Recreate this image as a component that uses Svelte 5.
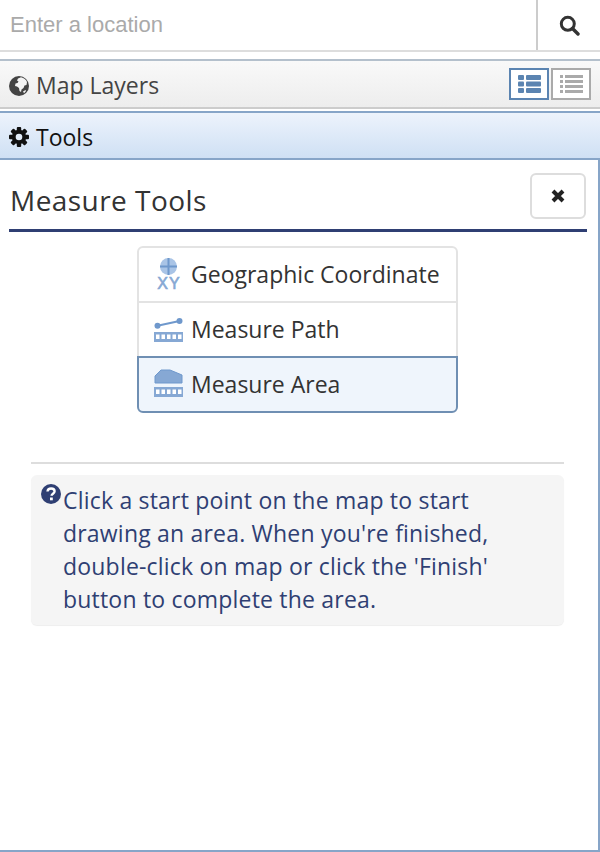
<script>
    const tools = [
        { label: "Geographic Coordinate", icon: "xy" },
        { label: "Measure Path", icon: "path" },
        { label: "Measure Area", icon: "area", active: true }
    ];
    const notches = [2, 7.5, 13, 18.5, 24];
</script>

<div class="page">
    <div class="search">
        <div class="search-input">Enter a location</div>
        <div class="search-btn">
            <svg width="21" height="21" viewBox="0 0 21 21" fill="none" stroke="#333">
                <circle cx="8.8" cy="8.8" r="6.5" stroke-width="3" />
                <path d="M13.500 13.500l5.500 5.500" stroke-width="3.400" stroke-linecap="round" />
            </svg>
        </div>
    </div>

    <div class="bar layers">
        <svg class="bar-icon globe" width="20" height="20" viewBox="0 0 20 20">
            <circle cx="10" cy="10" r="10" fill="#444" />
            <path d="M9 2.500l3-1.300c3 .6 5 2.300 6 4.800l-.5 3-2 .5-1 2.500-2 1.500-.5 2.500-1.500-1-.5-3-2-1.500-2-.5.5-2.500 2-.5 1-1.500-1.500-1z" fill="#f4f4f4" />
            <path d="M5 3.500l1 1.500-2 2.500.5 3 2.500 2.500-.3 2.500-2 2c-2.500-2-3.500-4.500-3.500-7 0-3 1.500-5.500 3.800-7z" fill="#444" />
            <path d="M14 15.500l2.500-1.500.5 1-2 2.200z" fill="#f4f4f4" />
        </svg>
        <span>Map Layers</span>
        <div class="toggles">
            <div class="toggle on">
                <svg width="23" height="18" viewBox="0 0 23 18" fill="#5b84b1">
                    <rect width="6" height="5" y="0" rx="1" /><rect x="8" width="15" height="5" y="0" rx="1" />
                    <rect width="6" height="5" y="6.500" rx="1" /><rect x="8" width="15" height="5" y="6.500" rx="1" />
                    <rect width="6" height="5" y="13" rx="1" /><rect x="8" width="15" height="5" y="13" rx="1" />
                </svg>
            </div>
            <div class="toggle">
                <svg width="23" height="18" viewBox="0 0 23 18" fill="#aaa">
                    <rect width="3" height="3" y="0" /><rect x="5" width="18" height="3" y="0" />
                    <rect width="3" height="3" y="5" /><rect x="5" width="18" height="3" y="5" />
                    <rect width="3" height="3" y="10" /><rect x="5" width="18" height="3" y="10" />
                    <rect width="3" height="3" y="15" /><rect x="5" width="18" height="3" y="15" />
                </svg>
            </div>
        </div>
    </div>

    <div class="bar tools-bar">
        <svg class="bar-icon gear" width="20" height="20" viewBox="0 0 20 20">
            <g fill="#111">
                <circle cx="10" cy="10" r="7.200" />
                <rect x="7.800" y="0" width="4.400" height="20" rx="1" />
                <rect x="7.800" y="0" width="4.400" height="20" rx="1" transform="rotate(45 10 10)" />
                <rect x="7.800" y="0" width="4.400" height="20" rx="1" transform="rotate(90 10 10)" />
                <rect x="7.800" y="0" width="4.400" height="20" rx="1" transform="rotate(135 10 10)" />
            </g>
            <circle cx="10" cy="10" r="3.300" fill="#e3edf9" />
        </svg>
        <span>Tools</span>
    </div>

    <div class="panel">
        <div class="panel-head">
            <h2>Measure Tools</h2>
            <button class="close" aria-label="Close">
                <svg width="14" height="14" viewBox="0 0 14 14" stroke="#222" stroke-width="4">
                    <path d="M2 2l10 10M12 2L2 12" />
                </svg>
            </button>
        </div>

        <div class="list">
            {#each tools as tool}
                <div class="item" class:active={tool.active}>
                    <svg class="tool-icon" width="30" height="30" viewBox="0 0 30 30">
                        {#if tool.icon === "xy"}
                            <circle cx="14.500" cy="7.500" r="8.500" fill="#a9c4e6" />
                            <path d="M14.500 -1v17M6 7.500h17" stroke="#6f98cc" stroke-width="2" />
                            <text x="15" y="29.500" text-anchor="middle" class="xy">XY</text>
                        {:else}
                            {#if tool.icon === "path"}
                                <path d="M3.500 11.700L25.500 7" stroke="#6f98cc" stroke-width="2" />
                                <circle cx="3.500" cy="11.700" r="3" fill="#6f98cc" />
                                <circle cx="25.500" cy="7" r="3" fill="#6f98cc" />
                            {:else}
                                <path d="M1 7l6-6h9l12 5v8H1z" fill="#86a8d4" stroke="#6f98cc" />
                            {/if}
                            <rect x="0" y="18" width="29" height="10" fill="#86a8d4" />
                            {#each notches as x}
                                <rect x={x} y="20.500" width="3.500" height="4.500" fill="#fff" />
                            {/each}
                        {/if}
                    </svg>
                    <span>{tool.label}</span>
                </div>
            {/each}
        </div>

        <hr />

        <div class="help">
            <svg class="help-icon" width="20" height="20" viewBox="0 0 20 20">
                <circle cx="10" cy="10" r="10" fill="#2f3f73" />
                <path d="M6.500 7.500c.2-2 1.700-3 3.600-3 2 0 3.500 1.100 3.500 2.800 0 2.500-3 2.500-3 4.500" fill="none" stroke="#fff" stroke-width="2.400" />
                <rect x="9" y="13.500" width="2.800" height="2.800" fill="#fff" />
            </svg>
            <p>Click a start point on the map to start drawing an area. When you're finished, double-click on map or click the 'Finish' button to complete the area.</p>
        </div>
    </div>
</div>

<style>
    :global(body) {
        margin: 0;
        background: #fff;
    }

    .page {
        width: 600px;
        height: 852px;
        display: flex;
        flex-direction: column;
        font-family: "Open Sans", "Noto Sans", sans-serif;
        overflow: hidden;
    }

    .search {
        height: 50px;
        flex: none;
        display: flex;
        border-bottom: 2px solid #ddd;
        margin-bottom: 7px;
    }

    .search-input {
        flex: 1;
        padding-left: 10px;
        line-height: 50px;
        font-family: "Liberation Sans", sans-serif;
        font-size: 22px;
        color: #aaa;
    }

    .search-btn {
        width: 64px;
        display: flex;
        align-items: center;
        justify-content: center;
        border-left: 2px solid #ccc;
        box-sizing: border-box;
    }

    .bar {
        flex: none;
        box-sizing: border-box;
        display: flex;
        align-items: center;
        padding: 2px 0 0 9px;
        font-size: 23px;
    }

    .bar-icon {
        margin-right: 7px;
        flex: none;
    }

    .globe,
    .gear {
        margin-top: 1px;
    }

    .layers {
        height: 50px;
        color: #444;
        background: linear-gradient(#f9f9f9, #ededed);
        border-top: 2px solid #b4c0cc;
        border-bottom: 2px solid #ccc;
        margin-bottom: 2px;
    }

    .toggles {
        margin: 0 9px 3px auto;
        display: flex;
        gap: 2px;
    }

    .toggle {
        width: 40px;
        height: 32px;
        box-sizing: border-box;
        border: 2px solid #aaa;
        background: #fff;
        display: flex;
        align-items: center;
        justify-content: center;
    }

    .toggle.on {
        border-color: #5b84b1;
    }

    .tools-bar {
        height: 49px;
        color: #111;
        background: linear-gradient(#edf3fc, #cfe0f4);
        border-top: 2px solid #87a5c8;
        border-bottom: 2px solid #87a5c8;
    }

    .panel {
        flex: 1;
        box-sizing: border-box;
        border-right: 2px solid #87a5c8;
        border-bottom: 2px solid #87a5c8;
        padding: 0 11px 0 9px;
    }

    .panel-head {
        height: 69px;
        display: flex;
        align-items: center;
        justify-content: space-between;
        border-bottom: 3px solid #2f3f73;
    }

    h2 {
        margin: 10px 0 0 1px;
        font-size: 28px;
        font-weight: 400;
        letter-spacing: 0.450px;
        color: #333;
    }

    .close {
        width: 56px;
        height: 46px;
        margin: 3px 1px 0 0;
        box-sizing: border-box;
        border: 2px solid #ddd;
        border-radius: 6px;
        background: #fff;
        display: flex;
        align-items: center;
        justify-content: center;
        padding: 0;
    }

    .list {
        width: 321px;
        margin: 14px 0 0 128px;
    }

    .item {
        height: 57px;
        box-sizing: border-box;
        display: flex;
        align-items: center;
        gap: 7px;
        padding: 0 0 1px 15px;
        border: 2px solid #e3e3e3;
        margin-top: -2px;
        font-size: 23px;
        color: #333;
        background: #fff;
    }

    .item:first-child {
        margin-top: 0;
        border-radius: 6px 6px 0 0;
    }

    .item.active {
        border-color: #6f8fb3;
        background: #eff5fc;
        border-radius: 0 0 6px 6px;
    }

    .tool-icon {
        flex: none;
        overflow: visible;
    }

    .xy {
        font: 400 16px "Liberation Sans", sans-serif;
        letter-spacing: 1px;
        fill: #86a8d4;
        stroke: #86a8d4;
        stroke-width: 0.600px;
    }

    hr {
        border: 0;
        height: 2px;
        background: #ddd;
        margin: 49px 23px 11px 22px;
    }

    .help {
        margin: 0 23px 0 22px;
        background: #f5f5f5;
        border-radius: 6px;
        padding: 9px 30px 9px 10px;
        display: flex;
        gap: 2px;
        box-shadow: 0 1px 1px #eee;
    }

    .help-icon {
        flex: none;
    }

    .help p {
        margin: 0;
        font-size: 23px;
        letter-spacing: 0.200px;
        line-height: 33px;
        color: #2f3f73;
    }
</style>
